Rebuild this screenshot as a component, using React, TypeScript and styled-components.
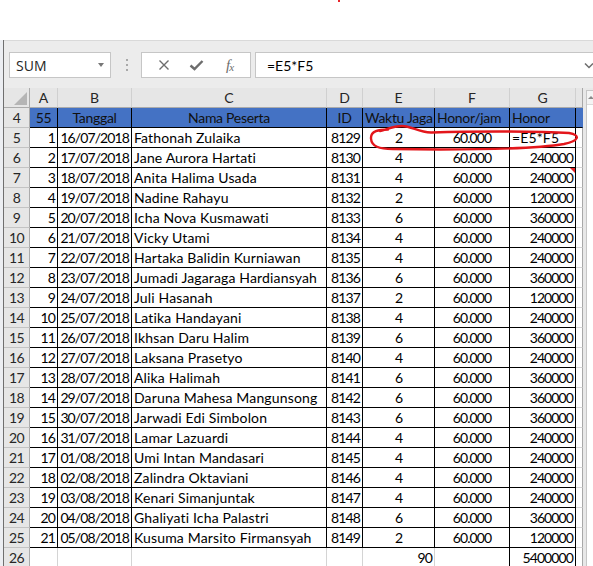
import React from 'react';
import styled, { createGlobalStyle, css } from 'styled-components';

const GlobalStyle = createGlobalStyle`
  html, body { margin: 0; padding: 0; background: #ffffff; }
  body { width: 593px; height: 566px; overflow: hidden; }
  #root { width: 593px; height: 566px; }
`;

const CELL_FONT = `Lato, "Liberation Sans", sans-serif`;
const UI_FONT = `"Open Sans", "Noto Sans", sans-serif`;

const Page = styled.div`
  position: relative;
  width: 593px;
  height: 566px;
  overflow: hidden;
  display: flex;
  flex-direction: column;
  background: #ffffff;
`;

const TopBlank = styled.div`
  height: 40px;
  flex: none;
  background: #ffffff;
`;

const RedDot = styled.span`
  position: absolute;
  left: 338px;
  top: 0;
  width: 2px;
  height: 2px;
  background: #e8262b;
`;

const Body = styled.div`
  flex: 1;
  display: flex;
  min-height: 0;
`;

const LeftEdge = styled.div`
  width: 3px;
  flex: none;
  background: #eceef2;
  border-right: 1px solid #6f6f6f;
`;

const Workspace = styled.div`
  flex: 1;
  display: flex;
  flex-direction: column;
  min-width: 0;
`;

const FormulaBar = styled.div`
  height: 48px;
  flex: none;
  box-sizing: border-box;
  border-top: 1px solid #d9d9d9;
  background: #ececec;
  display: flex;
  align-items: flex-start;
  padding: 11px 0 0 5px;
`;

const NameBox = styled.div`
  box-sizing: border-box;
  width: 102px;
  height: 26px;
  background: #ffffff;
  border: 1px solid #c6c6c6;
  display: flex;
  align-items: center;
  justify-content: space-between;
  padding: 0 6px 0 6px;
  font-family: ${UI_FONT};
  font-size: 14px;
  color: #262626;
`;

const DropTriangle = styled.span`
  width: 0;
  height: 0;
  border-left: 3.5px solid transparent;
  border-right: 3.5px solid transparent;
  border-top: 4px solid #777777;
`;

const GripDots = styled.div`
  width: 2px;
  height: 26px;
  margin: 0 13px 0 15px;
  display: flex;
  flex-direction: column;
  justify-content: center;
  gap: 3px;
`;

const Dot = styled.span`
  width: 2px;
  height: 2px;
  background: #a9a9a9;
`;

const ButtonBox = styled.div`
  box-sizing: border-box;
  width: 110px;
  height: 26px;
  background: #ffffff;
  border: 1px solid #c6c6c6;
  display: flex;
  align-items: center;
  justify-content: space-around;
  padding: 0 4px 0 6px;
`;

const BarButton = styled.span`
  width: 22px;
  height: 24px;
  display: flex;
  align-items: center;
  justify-content: center;
  color: #6d6d6d;
`;

const FxLabel = styled.span`
  font-family: "Liberation Serif", "DejaVu Serif", serif;
  font-style: italic;
  font-size: 15px;
  color: #6d6d6d;
  letter-spacing: -1px;
  & > sub {
    font-size: 11px;
    vertical-align: baseline;
    position: relative;
    top: 1px;
  }
`;

const FormulaInput = styled.div`
  box-sizing: border-box;
  flex: 1;
  height: 26px;
  margin-left: 4px;
  margin-right: -6px;
  background: #ffffff;
  border: 1px solid #c6c6c6;
  display: flex;
  align-items: center;
  justify-content: space-between;
  padding: 0 4px 0 11px;
  font-family: ${CELL_FONT};
  font-size: 14px;
  color: #000000;
`;

const SheetArea = styled.div`
  flex: 1;
  display: flex;
  min-height: 0;
  overflow: hidden;
`;

const Grid = styled.div`
  display: grid;
  grid-template-columns: 26px 28px 74px 195px 36px 72px 75px 66px 7px;
  grid-auto-rows: 20px;
  align-content: start;
  flex: none;
`;

const cellBase = css`
  box-sizing: border-box;
  position: relative;
  display: flex;
  align-items: flex-end;
  overflow: hidden;
  white-space: nowrap;
  font-family: ${CELL_FONT};
  font-size: 14px;
  line-height: 16px;
  padding-bottom: 1px;
  color: #000000;
`;

type Align = 'left' | 'right' | 'center';

const justify = (a: Align) =>
  a === 'left' ? 'flex-start' : a === 'right' ? 'flex-end' : 'center';

const ColHeader = styled.div`
  ${cellBase};
  background: #e6e6e6;
  border-right: 1px solid #d0d0d0;
  border-bottom: 1px solid #ababab;
  justify-content: center;
  color: #262626;
`;

const Corner = styled.div`
  ${cellBase};
  background: #e6e6e6;
  border-right: 1px solid #ababab;
  border-bottom: 1px solid #ababab;
  &::after {
    content: '';
    position: absolute;
    right: 2px;
    bottom: 2px;
    width: 0;
    height: 0;
    border-left: 13px solid transparent;
    border-bottom: 13px solid #b5b5b5;
  }
`;

const RowHeader = styled.div`
  ${cellBase};
  background: #e6e6e6;
  border-right: 1px solid #ababab;
  border-bottom: 1px solid #c3c3c3;
  justify-content: center;
  color: #262626;
  letter-spacing: -0.6px;
`;

const TitleCell = styled.div<{ $align: Align; $edge?: boolean }>`
  ${cellBase};
  background: #4472c4;
  border-right: 1px solid ${(p) => (p.$edge ? '#4472c4' : '#000000')};
  border-bottom: 1px solid #000000;
  justify-content: ${(p) => justify(p.$align)};
  padding-left: ${(p) => (p.$align === 'left' ? '2px' : '0')};
  color: #111111;
  letter-spacing: -0.3px;
`;

const DataCell = styled.div<{ $align: Align; $num?: boolean }>`
  ${cellBase};
  background: #ffffff;
  border-right: 1px solid #000000;
  border-bottom: 1px solid #000000;
  justify-content: ${(p) => justify(p.$align)};
  padding-left: ${(p) => (p.$align === 'left' ? '2px' : '0')};
  padding-right: ${(p) => (p.$align === 'right' ? '2px' : '0')};
  letter-spacing: ${(p) => (p.$num ? '-0.9px' : '0.15px')};
`;

const GapCell = styled.div<{ $dark?: boolean }>`
  ${cellBase};
  background: #ffffff;
  border-right: 1px solid ${(p) => (p.$dark ? '#000000' : '#d4d4d4')};
  border-bottom: 1px solid #d4d4d4;
  justify-content: flex-end;
  padding-right: 2px;
  letter-spacing: -0.9px;
`;

const EdgeCell = styled.div`
  ${cellBase};
  background: #ffffff;
  border-right: 1px solid #a8a8a8;
  border-bottom: 1px solid #d4d4d4;
`;

const EdgeHeader = styled.div`
  ${cellBase};
  background: #e6e6e6;
  border-right: 1px solid #a8a8a8;
  border-bottom: 1px solid #ababab;
`;

const CommentMark = styled.span`
  position: absolute;
  top: 0;
  right: 0;
  width: 0;
  height: 0;
  border-left: 5px solid transparent;
  border-top: 5px solid #e8262b;
`;

const ScrollArea = styled.div`
  flex: 1;
  background: #e8e8e8;
  display: flex;
  padding: 2px 0 0 3px;
`;

const ScrollTrack = styled.div`
  flex: 1;
  background: #ffffff;
  border-left: 1px solid #c6c6c6;
  border-top: 1px solid #c6c6c6;
  display: flex;
  flex-direction: column;
`;

const ScrollArrow = styled.div`
  height: 13px;
  border-bottom: 1px solid #dadada;
  background: #f4f4f4;
  display: flex;
  align-items: center;
  padding-left: 1px;
  &::before {
    content: '';
    width: 0;
    height: 0;
    border-left: 3px solid transparent;
    border-right: 3px solid transparent;
    border-bottom: 3px solid #8a8a8a;
  }
`;

const Annotation = styled.svg`
  position: absolute;
  left: 360px;
  top: 118px;
  width: 225px;
  height: 36px;
  pointer-events: none;
  overflow: visible;
`;

type Row = [number, string, string, number, number, string];

const rows: Row[] = [
  [1, '16/07/2018', 'Fathonah Zulaika', 8129, 2, '=E5*F5'],
  [2, '17/07/2018', 'Jane Aurora Hartati', 8130, 4, '240000'],
  [3, '18/07/2018', 'Anita Halima Usada', 8131, 4, '240000'],
  [4, '19/07/2018', 'Nadine Rahayu', 8132, 2, '120000'],
  [5, '20/07/2018', 'Icha Nova Kusmawati', 8133, 6, '360000'],
  [6, '21/07/2018', 'Vicky Utami', 8134, 4, '240000'],
  [7, '22/07/2018', 'Hartaka Balidin Kurniawan', 8135, 4, '240000'],
  [8, '23/07/2018', 'Jumadi Jagaraga Hardiansyah', 8136, 6, '360000'],
  [9, '24/07/2018', 'Juli Hasanah', 8137, 2, '120000'],
  [10, '25/07/2018', 'Latika Handayani', 8138, 4, '240000'],
  [11, '26/07/2018', 'Ikhsan Daru Halim', 8139, 6, '360000'],
  [12, '27/07/2018', 'Laksana Prasetyo', 8140, 4, '240000'],
  [13, '28/07/2018', 'Alika Halimah', 8141, 6, '360000'],
  [14, '29/07/2018', 'Daruna Mahesa Mangunsong', 8142, 6, '360000'],
  [15, '30/07/2018', 'Jarwadi Edi Simbolon', 8143, 6, '360000'],
  [16, '31/07/2018', 'Lamar Lazuardi', 8144, 4, '240000'],
  [17, '01/08/2018', 'Umi Intan Mandasari', 8145, 4, '240000'],
  [18, '02/08/2018', 'Zalindra Oktaviani', 8146, 4, '240000'],
  [19, '03/08/2018', 'Kenari Simanjuntak', 8147, 4, '240000'],
  [20, '04/08/2018', 'Ghaliyati Icha Palastri', 8148, 6, '360000'],
  [21, '05/08/2018', 'Kusuma Marsito Firmansyah', 8149, 2, '120000'],
];

const letters = ['A', 'B', 'C', 'D', 'E', 'F', 'G'];

const CancelIcon = () => (
  <svg width="12" height="12" viewBox="0 0 12 12">
    <path d="M1.5 1.5 L10.5 10.5 M10.5 1.5 L1.5 10.5" stroke="#6d6d6d" strokeWidth="1.4" fill="none" />
  </svg>
);

const EnterIcon = () => (
  <svg width="15" height="12" viewBox="0 0 15 12">
    <path d="M1.5 6.5 L5.5 10 L13.5 2" stroke="#6d6d6d" strokeWidth="2.4" fill="none" />
  </svg>
);

const Chevron = () => (
  <svg width="10" height="7" viewBox="0 0 10 7">
    <path d="M1 1.5 L5 5.5 L9 1.5" stroke="#6d6d6d" strokeWidth="1.5" fill="none" />
  </svg>
);

export default function App() {
  const total = rows.reduce((s, r) => s + r[4], 0);
  const totalHonor = rows.reduce((s, r) => s + r[4] * 60000, 0);
  return (
    <Page>
      <GlobalStyle />
      <TopBlank />
      <RedDot />
      <Body>
        <LeftEdge />
        <Workspace>
          <FormulaBar>
            <NameBox>
              <span>SUM</span>
              <DropTriangle />
            </NameBox>
            <GripDots>
              <Dot />
              <Dot />
              <Dot />
            </GripDots>
            <ButtonBox>
              <BarButton>
                <CancelIcon />
              </BarButton>
              <BarButton>
                <EnterIcon />
              </BarButton>
              <BarButton>
                <FxLabel>
                  f<sub>x</sub>
                </FxLabel>
              </BarButton>
            </ButtonBox>
            <FormulaInput>
              <span>=E5*F5</span>
              <Chevron />
            </FormulaInput>
          </FormulaBar>
          <SheetArea>
            <Grid>
              <Corner />
              {letters.map((l) => (
                <ColHeader key={l}>{l}</ColHeader>
              ))}
              <EdgeHeader />

              <RowHeader>4</RowHeader>
              <TitleCell $align="center">55</TitleCell>
              <TitleCell $align="center">Tanggal</TitleCell>
              <TitleCell $align="center">Nama Peserta</TitleCell>
              <TitleCell $align="center">ID</TitleCell>
              <TitleCell $align="left">Waktu Jaga</TitleCell>
              <TitleCell $align="left">Honor/jam</TitleCell>
              <TitleCell $align="left">Honor</TitleCell>
              <TitleCell $align="left" $edge />

              {rows.map((r, i) => (
                <React.Fragment key={r[0]}>
                  <RowHeader>{i + 5}</RowHeader>
                  <DataCell $align="right" $num>{r[0]}</DataCell>
                  <DataCell $align="right" $num>{r[1]}</DataCell>
                  <DataCell $align="left">{r[2]}</DataCell>
                  <DataCell $align="right" $num>{r[3]}</DataCell>
                  <DataCell $align="center" $num>{r[4]}</DataCell>
                  <DataCell $align="center" $num>60.000</DataCell>
                  <DataCell $align={i === 0 ? 'left' : 'right'} $num={i !== 0}>
                    {r[5]}
                    {i === 2 && <CommentMark />}
                  </DataCell>
                  <EdgeCell />
                </React.Fragment>
              ))}

              <RowHeader>26</RowHeader>
              <GapCell />
              <GapCell />
              <GapCell />
              <GapCell />
              <GapCell>{total}</GapCell>
              <GapCell $dark />
              <GapCell $dark>{totalHonor}</GapCell>
              <EdgeCell />
            </Grid>
            <ScrollArea>
              <ScrollTrack>
                <ScrollArrow />
              </ScrollTrack>
            </ScrollArea>
          </SheetArea>
        </Workspace>
      </Body>
      <Annotation viewBox="360 118 225 36">
        <path
          d="M388 129.5 C379 129.5 370.5 131 371 138.5 C371.5 146.5 379 149 393 149 L440 149.5 C492 149.5 541 148 564 144 C579 141 581 135 569 133 C540 131 475 131 432 132.5 C419 133 412 126 402 126 C394 126 389 128.5 380 131"
          stroke="#e3161b"
          strokeWidth="2.4"
          fill="none"
          strokeLinecap="round"
        />
      </Annotation>
    </Page>
  );
}
